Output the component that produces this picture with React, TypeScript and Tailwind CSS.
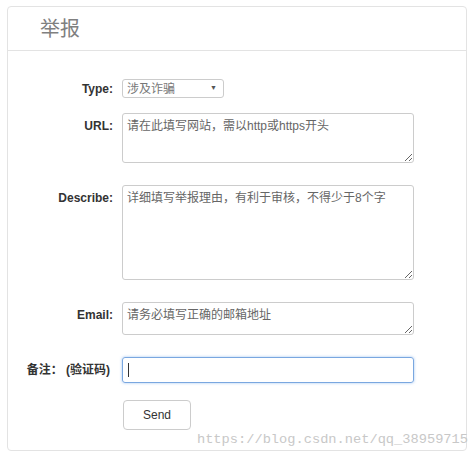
import React from 'react';

const font = { fontFamily: '"Liberation Sans", "Noto Sans CJK SC", sans-serif' };

interface Field {
  label: string;
  placeholder: string;
  height: string;
  gap: string;
}

const fields: Field[] = [
  { label: 'URL:', placeholder: '请在此填写网站，需以http或https开头', height: 'h-[50px]', gap: 'mt-[15px]' },
  { label: 'Describe:', placeholder: '详细填写举报理由，有利于审核，不得少于8个字', height: 'h-[95px]', gap: 'mt-[22px]' },
  { label: 'Email:', placeholder: '请务必填写正确的邮箱地址', height: 'h-[33px]', gap: 'mt-[22px]' },
];

const Label = ({ children, className = '' }: { children: React.ReactNode; className?: string }) => (
  <label className={`w-[105px] shrink-0 text-right text-[12px] font-bold text-[#333] whitespace-pre ${className}`}>{children}</label>
);

const App = () => {
  return (
    <div className="w-[474px] h-[460px] bg-white pt-[6px] pl-[7px]" style={font}>
      <div className="relative w-[460px] h-[445px] rounded-[4px] border border-[#e3e3e3] bg-white">
        <div className="h-[44px] border-b border-[#e3e3e3] pl-[32px] flex items-center">
          <h1 className="text-[20px] text-[#808080] font-normal">举报</h1>
        </div>

        <div className="pt-[28px]">
          <div className="flex items-center">
            <Label className="pt-[1px]">Type:</Label>
            <div className="ml-[9px] w-[102px] h-[19px] rounded-[3px] border border-[#ccc] flex items-center justify-between pl-[4px] pr-[6px] text-[12px] text-[#777]">
              <span>涉及诈骗</span>
              <span className="text-[7px] text-[#555]">▼</span>
            </div>
          </div>

          {fields.map((field, index) => (
            <div key={index} className={`flex items-start ${field.gap}`}>
              <Label className="pt-[4px]">{field.label}</Label>
              <textarea
                placeholder={field.placeholder}
                className={`ml-[9px] w-[292px] shrink-0 ${field.height} rounded-[3px] border border-[#ccc] px-[4px] py-[3px] text-[12px] leading-[18px] text-[#333] placeholder:text-[#666] outline-none`}
              />
            </div>
          ))}

          <div className="flex items-center mt-[22px]">
            <Label className="text-[11px] pr-[3px]">备注： (验证码)</Label>
            <div className="ml-[9px] w-[292px] h-[26px] rounded-[3px] border border-[#7aa7e0] shadow-[0_0_3px_rgba(102,160,233,0.6)] flex items-center pl-[5px]">
              <span className="w-px h-[14px] bg-[#333]" />
            </div>
          </div>

          <div className="mt-[17px] ml-[115px]">
            <button className="w-[68px] h-[30px] rounded-[4px] border border-[#ccc] bg-white text-[12px] text-[#333]">
              Send
            </button>
          </div>
        </div>

        <div
          className="absolute right-[-2px] bottom-[-1px] text-[13.7px] text-[#c8c8c8]"
          style={{ fontFamily: '"Liberation Mono", monospace' }}
        >
          https://blog.csdn.net/qq_38959715
        </div>
      </div>
    </div>
  );
};

export default App;
